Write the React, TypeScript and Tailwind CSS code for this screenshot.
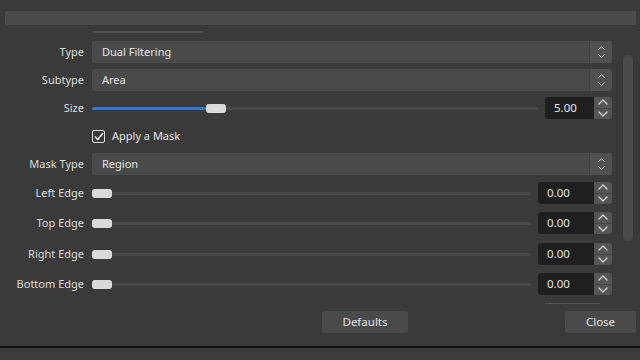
import React from 'react';

const font = { fontFamily: '"Noto Sans", "Open Sans", Arial, sans-serif' };

function Chevron({ up, size = 8 }: { up?: boolean; size?: number }) {
  return (
    <svg width={size} height={size * 0.6} viewBox="0 0 10 6" fill="none">
      <path d={up ? 'M1 5 L5 1 L9 5' : 'M1 1 L5 5 L9 1'} stroke="#d8d8d8" strokeWidth="1.3" strokeLinecap="round" strokeLinejoin="round" />
    </svg>
  );
}

function Combo({ value }: { value: string }) {
  return (
    <div className="flex h-[22px] w-[520px] items-stretch rounded-[3px] bg-[#4a4a4a]">
      <div className="flex flex-1 items-center pl-[10px] text-[11px] text-[#e4e4e4]">{value}</div>
      <div className="flex w-[23px] flex-col items-center justify-center gap-[3px] rounded-r-[3px] border-l border-[#3f3f3f] bg-[#505050]">
        <Chevron up size={7} />
        <Chevron size={7} />
      </div>
    </div>
  );
}

function Spin({ value, w }: { value: string; w: string }) {
  return (
    <div className="flex h-[22px] items-stretch">
      <div className={`${w} flex items-center rounded-l-[3px] bg-[#1f1f1f] pl-[9px] text-[11.5px] text-[#e4e4e4]`}>{value}</div>
      <div className="flex w-[18px] flex-col rounded-r-[3px] bg-[#555555]">
        <div className="flex flex-1 items-center justify-center border-b border-[#444]">
          <Chevron up size={10} />
        </div>
        <div className="flex flex-1 items-center justify-center">
          <Chevron size={10} />
        </div>
      </div>
    </div>
  );
}

function Slider({ pct, spinW, value }: { pct: number; spinW: string; value: string }) {
  return (
    <div className="flex w-[520px] items-center gap-[7px]">
      <div className="relative flex h-[10px] flex-1 items-center">
        <div className="h-[3px] w-full rounded-full bg-[#4a4a4a]" />
        <div className="absolute left-0 h-[3px] rounded-full bg-[#2f7ad3]" style={{ width: `${pct}%` }} />
        <div className="absolute h-[9px] w-[20px] rounded-[3px] bg-[#dadada]" style={{ left: `${pct}%` }} />
      </div>
      <Spin value={value} w={spinW} />
    </div>
  );
}

function Row({ label, children, mt }: { label: string; children: React.ReactNode; mt: string }) {
  return (
    <div className={`flex items-center gap-[8px] ${mt}`}>
      <div className="w-[84px] text-right text-[11px] text-[#dcdcdc]">{label}</div>
      {children}
    </div>
  );
}

export default function App() {
  return (
    <div className="relative flex h-[360px] w-[640px] flex-col overflow-hidden bg-[#3a3a3a]" style={font}>
      <div className="ml-[5px] mr-[4px] mt-[11px] h-[14px] bg-[#4b4b4b]" />
      <div className="flex">
        <div className="flex w-[620px] flex-col">
          <div className="ml-[93px] mt-[6px] h-[2px] w-[110px] bg-[#505050]" />
          <Row label="Type" mt="mt-[8px]">
            <Combo value="Dual Filtering" />
          </Row>
          <Row label="Subtype" mt="mt-[6px]">
            <Combo value="Area" />
          </Row>
          <Row label="Size" mt="mt-[6px]">
            <Slider pct={25.6} spinW="w-[49px]" value="5.00" />
          </Row>
          <div className="ml-[92px] mt-[6px] flex h-[22px] items-center gap-[7px]">
            <div className="flex h-[13px] w-[13px] items-center justify-center rounded-[2px] border border-[#dcdcdc]">
              <svg width="10" height="9" viewBox="0 0 10 9" fill="none">
                <path d="M1 4.5 L3.8 7.5 L9 1" stroke="#ececec" strokeWidth="1.5" />
              </svg>
            </div>
            <span className="text-[11px] text-[#e4e4e4]">Apply a Mask</span>
          </div>
          <Row label="Mask Type" mt="mt-[6px]">
            <Combo value="Region" />
          </Row>
          <Row label="Left Edge" mt="mt-[7px]">
            <Slider pct={0} spinW="w-[56px]" value="0.00" />
          </Row>
          <Row label="Top Edge" mt="mt-[8px]">
            <Slider pct={0} spinW="w-[56px]" value="0.00" />
          </Row>
          <Row label="Right Edge" mt="mt-[9px]">
            <Slider pct={0} spinW="w-[56px]" value="0.00" />
          </Row>
          <Row label="Bottom Edge" mt="mt-[8px]">
            <Slider pct={0} spinW="w-[56px]" value="0.00" />
          </Row>
          <div className="ml-[545px] mt-[8px] h-[1px] w-[55px] bg-[#555]" />
        </div>
        <div className="ml-[3px] mt-[30px] h-[186px] w-[10px] rounded-full bg-[#4a4a4a]" />
      </div>
      <div className="mt-[7px] flex">
        <button className="ml-[322px] h-[22px] w-[86px] rounded-[3px] bg-[#4a4a4a] text-[11.5px] text-[#e4e4e4]">Defaults</button>
        <button className="ml-auto mr-[4px] h-[22px] w-[71px] rounded-[3px] bg-[#4a4a4a] text-[11.5px] text-[#e4e4e4]">Close</button>
      </div>
      <div className="mt-auto h-[2px] bg-[#111]" />
      <div className="h-[12px] bg-[#3c3c3c]" />
    </div>
  );
}
